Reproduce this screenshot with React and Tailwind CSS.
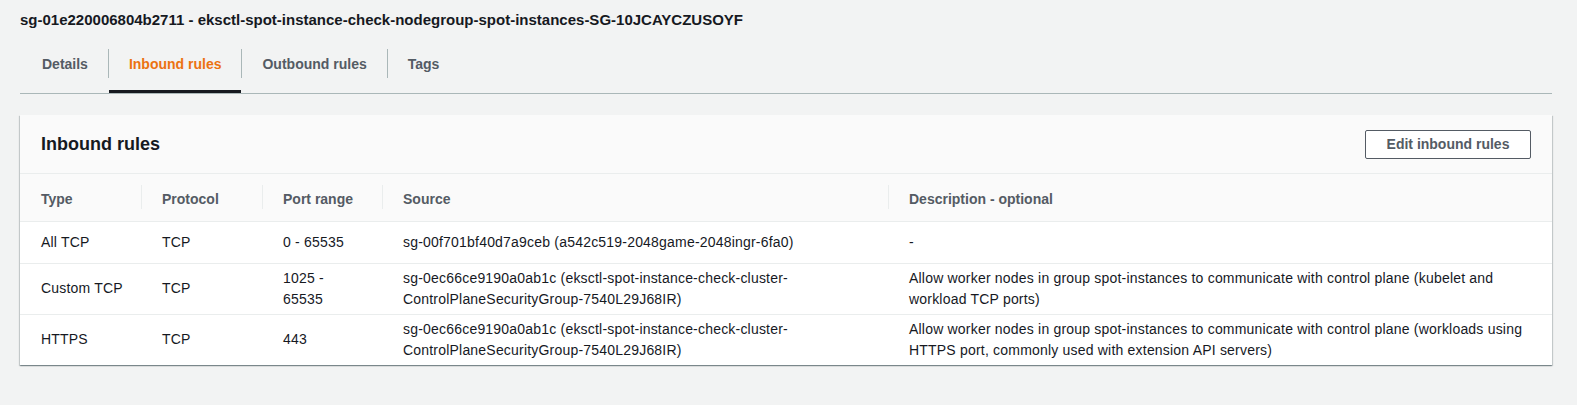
import React from "react";

const rules = [
  {
    type: "All TCP",
    protocol: "TCP",
    port: "0 - 65535",
    source: "sg-00f701bf40d7a9ceb (a542c519-2048game-2048ingr-6fa0)",
    description: "-",
  },
  {
    type: "Custom TCP",
    protocol: "TCP",
    port: "1025 - 65535",
    source: "sg-0ec66ce9190a0ab1c (eksctl-spot-instance-check-cluster-ControlPlaneSecurityGroup-7540L29J68IR)",
    description:
      "Allow worker nodes in group spot-instances to communicate with control plane (kubelet and workload TCP ports)",
  },
  {
    type: "HTTPS",
    protocol: "TCP",
    port: "443",
    source: "sg-0ec66ce9190a0ab1c (eksctl-spot-instance-check-cluster-ControlPlaneSecurityGroup-7540L29J68IR)",
    description:
      "Allow worker nodes in group spot-instances to communicate with control plane (workloads using HTTPS port, commonly used with extension API servers)",
  },
];

const tabs = ["Details", "Inbound rules", "Outbound rules", "Tags"];

// widths picked so the separators land where the console draws them
const columns = [
  { label: "Type", w: "w-[121px]" },
  { label: "Protocol", w: "w-[121px]" },
  { label: "Port range", w: "w-[120px]" },
  { label: "Source", w: "w-[506px]" },
  { label: "Description - optional", w: "" },
];

export default function App() {
  return (
    <div
      className="min-h-[405px] bg-[#f2f3f3] pl-5 pr-[25px] pt-[9px] text-[#16191f]"
      style={{ fontFamily: '"Liberation Sans", Arial, sans-serif' }}
    >
      {/* Title */}
      <h1 className="text-[15px] font-bold leading-[22px]">
        sg-01e220006804b2711 - eksctl-spot-instance-check-nodegroup-spot-instances-SG-10JCAYCZUSOYF
      </h1>

      {/* Tabs */}
      <div className="mt-[16px] flex border-b border-[#aab7b8] pl-[2px]">
        {tabs.map((t, i) => (
          <div key={t} className="flex items-start">
            {i > 0 && <div className="mt-[2px] h-[29px] w-px bg-[#aab7b8]" />}
            <div
              className={`h-[46px] px-5 pt-[8px] text-[14px] font-bold leading-[18px] ${
                t === "Inbound rules"
                  ? "border-b-[3px] border-[#16191f] text-[#ec7211]"
                  : "text-[#545b64]"
              }`}
            >
              {t}
            </div>
          </div>
        ))}
      </div>

      {/* Card */}
      <div className="mt-[21px] bg-white shadow-[0_1px_1px_0_rgba(0,28,36,0.3),1px_1px_1px_0_rgba(0,28,36,0.15),-1px_1px_1px_0_rgba(0,28,36,0.15)]">
        <div className="flex h-[59px] items-center justify-between border-b border-[#eaeded] bg-[#fafafa] pl-[21px] pr-[21px]">
          <h2 className="text-[18px] font-bold leading-[22px]">Inbound rules</h2>
          <button className="h-[29px] w-[166px] rounded-[2px] border border-[#545b64] bg-white text-[14px] font-bold text-[#545b64]">
            Edit inbound rules
          </button>
        </div>

        <table className="w-full table-fixed border-collapse text-[14px] tracking-[0.2px]">
          <thead>
            <tr className="h-[47px] bg-[#fafafa]">
              {columns.map((c, i) => (
                <th key={c.label} className={`${c.w} p-0 text-left font-bold tracking-normal text-[#545b64]`}>
                  <div className="flex items-center">
                    {i > 0 && <div className="h-[24px] w-px bg-[#eaeded]" />}
                    <span className={i === 0 ? "pl-[21px] pt-[4px]" : "pl-5 pt-[4px]"}>{c.label}</span>
                  </div>
                </th>
              ))}
            </tr>
          </thead>
          <tbody>
            {rules.map((r) => (
              <tr key={r.type} className="h-[42px] border-t border-[#eaeded] align-middle leading-[21px]">
                <td className="py-[4px] pl-[21px] pr-4">{r.type}</td>
                <td className="py-[4px] pl-[21px] pr-4">{r.protocol}</td>
                <td className="py-[4px] pl-[21px] pr-4">{r.port}</td>
                <td className="py-[4px] pl-[21px] pr-4">{r.source}</td>
                <td className="py-[4px] pl-[21px] pr-4">{r.description}</td>
              </tr>
            ))}
          </tbody>
        </table>
      </div>
    </div>
  );
}
